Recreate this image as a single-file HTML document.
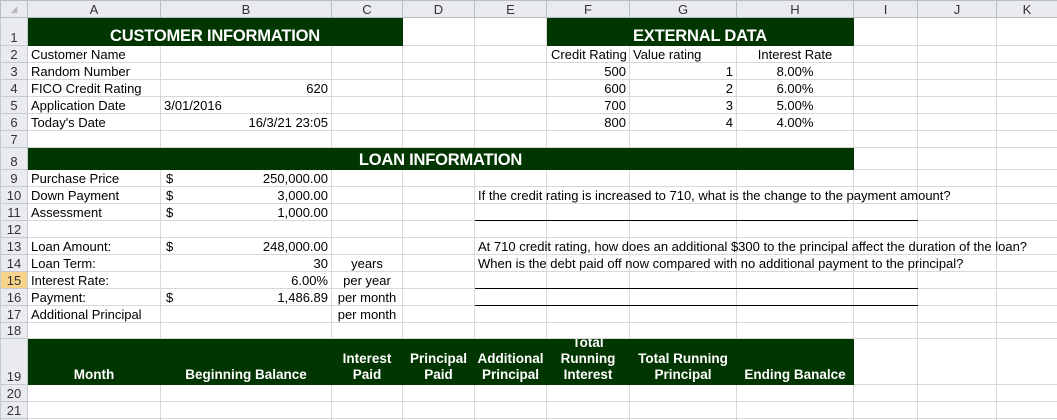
<!DOCTYPE html>
<html><head><meta charset="utf-8"><style>
*{margin:0;padding:0;box-sizing:border-box}
html,body{width:1057px;height:420px;overflow:hidden}
body{background:#fff;font-family:"Liberation Sans",Arial,sans-serif;font-size:13px;color:#000}
table{border-collapse:collapse;table-layout:fixed;width:1057px}
td{border:1px solid #d8d8d8;white-space:nowrap;overflow:visible;padding:0 3px;vertical-align:bottom;line-height:15px}
td.h{background:#e9ebee;border-color:#b8bcc4;color:#333;text-align:center;font-size:13px;padding:0}
td.rh{background:#e9ebee;border-color:#c5c9d0;color:#333;text-align:center;font-size:13px;padding:0}
td.sel{background:#f7d48a;color:#333}
.g{background:#013601;color:#fff;font-weight:bold;border-color:#013601}
.r{text-align:right}.c{text-align:center}
.t{font-size:16.5px;text-align:center;line-height:18px;letter-spacing:-0.2px}
.lb{border-bottom:1px solid #000}
.hd td.g{text-align:center;font-size:13.5px;line-height:16px;white-space:normal;padding:0 0 1px}
.clip{height:44px;overflow:hidden;display:flex;flex-direction:column;justify-content:flex-end}
</style></head><body>
<table>
<colgroup><col style="width:27px"><col style="width:133px"><col style="width:171px"><col style="width:71px"><col style="width:72px"><col style="width:72px"><col style="width:83px"><col style="width:107px"><col style="width:117px"><col style="width:64px"><col style="width:79px"><col style="width:61px"></colgroup>
<tr style="height:17px"><td class="h" style="color:#bbb;font-size:9px">◢</td><td class="h">A</td><td class="h">B</td><td class="h">C</td><td class="h">D</td><td class="h">E</td><td class="h">F</td><td class="h">G</td><td class="h">H</td><td class="h">I</td><td class="h">J</td><td class="h">K</td></tr>
<tr style="height:28px"><td class="rh">1</td><td class="g t" colspan="3">CUSTOMER INFORMATION</td><td></td><td></td><td class="g t" colspan="3">EXTERNAL DATA</td><td></td><td></td><td></td></tr>
<tr style="height:17px"><td class="rh">2</td><td>Customer Name</td><td></td><td></td><td></td><td></td><td style="padding-left:4px">Credit Rating</td><td>Value rating</td><td class="c">Interest Rate</td><td></td><td></td><td></td></tr>
<tr style="height:17px"><td class="rh">3</td><td>Random Number</td><td></td><td></td><td></td><td></td><td class="r">500</td><td class="r">1</td><td class="c">8.00%</td><td></td><td></td><td></td></tr>
<tr style="height:17px"><td class="rh">4</td><td>FICO Credit Rating</td><td class="r">620</td><td></td><td></td><td></td><td class="r">600</td><td class="r">2</td><td class="c">6.00%</td><td></td><td></td><td></td></tr>
<tr style="height:17px"><td class="rh">5</td><td>Application Date</td><td>3/01/2016</td><td></td><td></td><td></td><td class="r">700</td><td class="r">3</td><td class="c">5.00%</td><td></td><td></td><td></td></tr>
<tr style="height:17px"><td class="rh">6</td><td>Today's Date</td><td class="r">16/3/21 23:05</td><td></td><td></td><td></td><td class="r">800</td><td class="r">4</td><td class="c">4.00%</td><td></td><td></td><td></td></tr>
<tr style="height:17px"><td class="rh">7</td><td></td><td></td><td></td><td></td><td></td><td></td><td></td><td></td><td></td><td></td><td></td></tr>
<tr style="height:22px"><td class="rh">8</td><td class="g t" colspan="8">LOAN INFORMATION</td><td></td><td></td><td></td></tr>
<tr style="height:17px"><td class="rh">9</td><td>Purchase Price</td><td class="r"><span style="float:left;padding-left:2px">$</span>250,000.00</td><td></td><td></td><td></td><td></td><td></td><td></td><td></td><td></td><td></td></tr>
<tr style="height:17px"><td class="rh">10</td><td>Down Payment</td><td class="r"><span style="float:left;padding-left:2px">$</span>3,000.00</td><td></td><td></td><td>If the credit rating is increased to 710, what is the change to the payment amount?</td><td></td><td></td><td></td><td></td><td></td><td></td></tr>
<tr style="height:17px"><td class="rh">11</td><td>Assessment</td><td class="r"><span style="float:left;padding-left:2px">$</span>1,000.00</td><td></td><td></td><td class="lb"></td><td class="lb"></td><td class="lb"></td><td class="lb"></td><td class="lb"></td><td></td><td></td></tr>
<tr style="height:17px"><td class="rh">12</td><td></td><td></td><td></td><td></td><td></td><td></td><td></td><td></td><td></td><td></td><td></td></tr>
<tr style="height:17px"><td class="rh">13</td><td>Loan Amount:</td><td class="r"><span style="float:left;padding-left:2px">$</span>248,000.00</td><td></td><td></td><td>At 710 credit rating, how does an additional $300 to the principal affect the duration of the loan?</td><td></td><td></td><td></td><td></td><td></td><td></td></tr>
<tr style="height:17px"><td class="rh">14</td><td>Loan Term:</td><td class="r">30</td><td class="c">years</td><td></td><td>When is the debt paid off now compared with no additional payment to the principal?</td><td></td><td></td><td></td><td></td><td></td><td></td></tr>
<tr style="height:17px"><td class="rh sel">15</td><td>Interest Rate:</td><td class="r">6.00%</td><td class="c">per year</td><td></td><td class="lb"></td><td class="lb"></td><td class="lb"></td><td class="lb"></td><td class="lb"></td><td></td><td></td></tr>
<tr style="height:17px"><td class="rh">16</td><td>Payment:</td><td class="r"><span style="float:left;padding-left:2px">$</span>1,486.89</td><td class="c">per month</td><td></td><td class="lb"></td><td class="lb"></td><td class="lb"></td><td class="lb"></td><td class="lb"></td><td></td><td></td></tr>
<tr style="height:17px"><td class="rh">17</td><td>Additional Principal</td><td></td><td class="c">per month</td><td></td><td></td><td></td><td></td><td></td><td></td><td></td><td></td></tr>
<tr style="height:16px"><td class="rh">18</td><td></td><td></td><td></td><td></td><td></td><td></td><td></td><td></td><td></td><td></td><td></td></tr>
<tr class="hd" style="height:45px"><td class="rh">19</td><td class="g">Month</td><td class="g">Beginning Balance</td><td class="g">Interest Paid</td><td class="g">Principal Paid</td><td class="g">Additional Principal</td><td class="g"><div class="clip"><div>Total<br>Running<br>Interest</div></div></td><td class="g">Total Running Principal</td><td class="g">Ending Banalce</td><td></td><td></td><td></td></tr>
<tr style="height:17px"><td class="rh">20</td><td></td><td></td><td></td><td></td><td></td><td></td><td></td><td></td><td></td><td></td><td></td></tr>
<tr style="height:17px"><td class="rh">21</td><td></td><td></td><td></td><td></td><td></td><td></td><td></td><td></td><td></td><td></td><td></td></tr>
<tr style="height:17px"><td class="rh"></td><td></td><td></td><td></td><td></td><td></td><td></td><td></td><td></td><td></td><td></td><td></td></tr>
</table>
</body></html>
